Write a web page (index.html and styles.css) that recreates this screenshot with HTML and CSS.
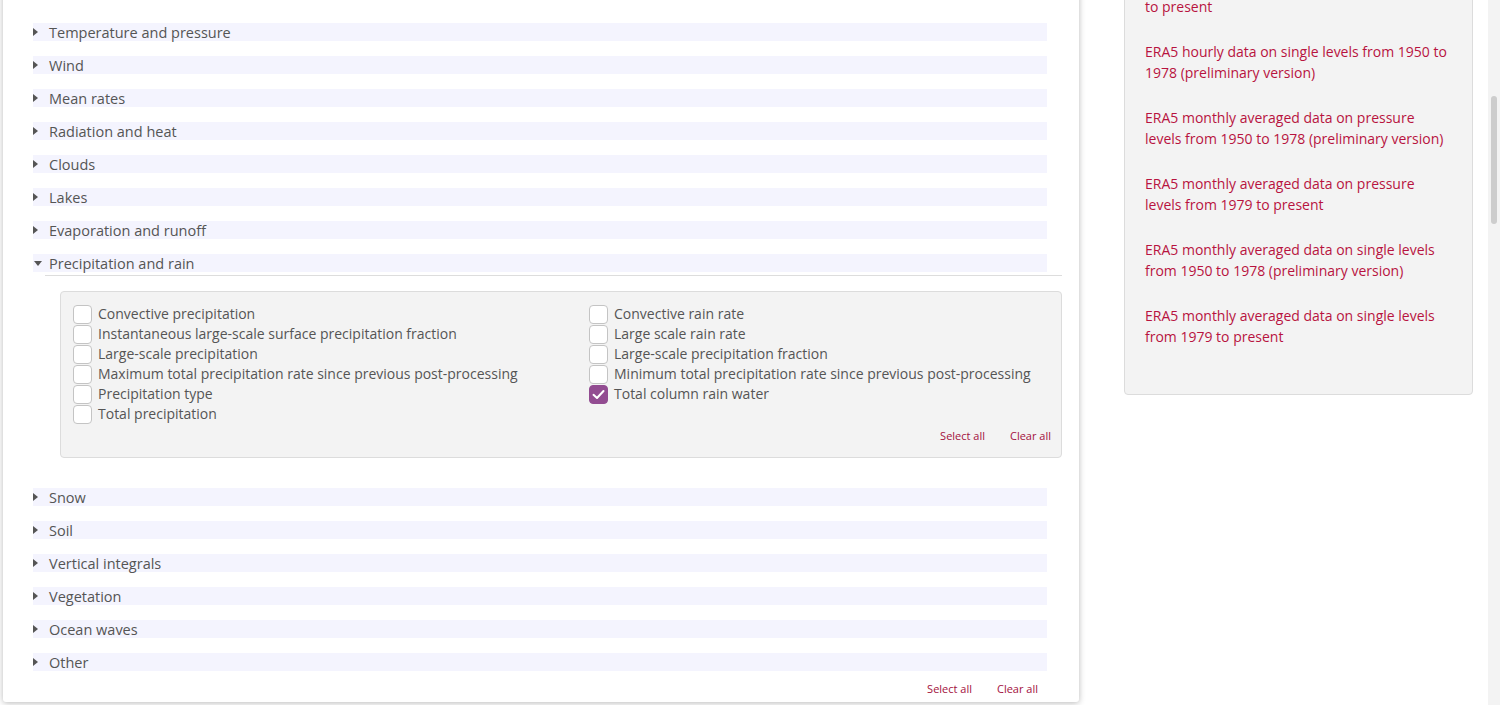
FILE: index.html
```html
<!DOCTYPE html>
<html lang="en">
<head>
<meta charset="utf-8">
<title>ERA5 variables</title>
<link rel="stylesheet" href="styles.css">
</head>
<body>
<div class="page">
  <main class="card">
    <div class="group"><div class="group-head"><span class="tri-right"></span><span class="head-text">Temperature and pressure</span></div></div>
    <div class="group"><div class="group-head"><span class="tri-right"></span><span class="head-text">Wind</span></div></div>
    <div class="group"><div class="group-head"><span class="tri-right"></span><span class="head-text">Mean rates</span></div></div>
    <div class="group"><div class="group-head"><span class="tri-right"></span><span class="head-text">Radiation and heat</span></div></div>
    <div class="group"><div class="group-head"><span class="tri-right"></span><span class="head-text">Clouds</span></div></div>
    <div class="group"><div class="group-head"><span class="tri-right"></span><span class="head-text">Lakes</span></div></div>
    <div class="group"><div class="group-head"><span class="tri-right"></span><span class="head-text">Evaporation and runoff</span></div></div>
    <div class="group group-open">
      <div class="group-head"><span class="tri-down"></span><span class="head-text">Precipitation and rain</span></div>
      <div class="divider"></div>
      <div class="panel">
        <div class="checks">
          <div class="col">
            <label class="check"><span class="box"></span>Convective precipitation</label>
            <label class="check"><span class="box"></span>Instantaneous large-scale surface precipitation fraction</label>
            <label class="check"><span class="box"></span>Large-scale precipitation</label>
            <label class="check"><span class="box"></span>Maximum total precipitation rate since previous post-processing</label>
            <label class="check"><span class="box"></span>Precipitation type</label>
            <label class="check"><span class="box"></span>Total precipitation</label>
          </div>
          <div class="col">
            <label class="check"><span class="box"></span>Convective rain rate</label>
            <label class="check"><span class="box"></span>Large scale rain rate</label>
            <label class="check"><span class="box"></span>Large-scale precipitation fraction</label>
            <label class="check"><span class="box"></span>Minimum total precipitation rate since previous post-processing</label>
            <label class="check"><span class="box box-on"><svg viewBox="0 0 19 19" width="19" height="19"><path d="M4.5 9.8 L8 13 L14.5 6" fill="none" stroke="#fff" stroke-width="2" stroke-linecap="round" stroke-linejoin="round"/></svg></span>Total column rain water</label>
          </div>
        </div>
        <div class="actions">
          <a class="action">Select all</a>
          <a class="action">Clear all</a>
        </div>
      </div>
    </div>
    <div class="group"><div class="group-head"><span class="tri-right"></span><span class="head-text">Snow</span></div></div>
    <div class="group"><div class="group-head"><span class="tri-right"></span><span class="head-text">Soil</span></div></div>
    <div class="group"><div class="group-head"><span class="tri-right"></span><span class="head-text">Vertical integrals</span></div></div>
    <div class="group"><div class="group-head"><span class="tri-right"></span><span class="head-text">Vegetation</span></div></div>
    <div class="group"><div class="group-head"><span class="tri-right"></span><span class="head-text">Ocean waves</span></div></div>
    <div class="group group-last"><div class="group-head"><span class="tri-right"></span><span class="head-text">Other</span></div></div>
    <div class="actions actions-main">
      <a class="action">Select all</a>
      <a class="action">Clear all</a>
    </div>
  </main>

  <aside class="side">
    <a class="side-link">ERA5 hourly data on pressure levels from 1979 to present</a>
    <a class="side-link">ERA5 hourly data on single levels from 1950 to 1978 (preliminary version)</a>
    <a class="side-link">ERA5 monthly averaged data on pressure levels from 1950 to 1978 (preliminary version)</a>
    <a class="side-link">ERA5 monthly averaged data on pressure levels from 1979 to present</a>
    <a class="side-link">ERA5 monthly averaged data on single levels from 1950 to 1978 (preliminary version)</a>
    <a class="side-link">ERA5 monthly averaged data on single levels from 1979 to present</a>
  </aside>

  <div class="scrollbar"><div class="thumb"></div></div>
</div>
</body>
</html>
```

FILE: styles.css
```css
* { box-sizing: border-box; }

html, body {
  margin: 0;
  padding: 0;
  height: 705px;
  overflow: hidden;
  background: #ffffff;
  font-family: "Open Sans", "Noto Sans", sans-serif;
  color: #555555;
}

.page {
  display: flex;
  align-items: flex-start;
  height: 705px;
}

.card {
  width: 1076px;
  height: 722px;
  margin-top: -20px;
  margin-left: 3px;
  padding: 43px 17px 6px 30px;
  background: #ffffff;
  border-radius: 3px;
  box-shadow: 0 1px 6px rgba(0, 0, 0, 0.28);
  flex: none;
}

.group {
  margin-bottom: 15px;
}

.group-last {
  margin-bottom: 0;
}

.group-head {
  display: flex;
  align-items: flex-start;
  height: 18px;
  margin-right: 15px;
  background: #f4f4fe;
  color: #555555;
}

.head-text {
  font-size: 14.5px;
  line-height: 20px;
  white-space: nowrap;
}

.tri-right {
  align-self: center;
  width: 0;
  height: 0;
  border-top: 4px solid transparent;
  border-bottom: 4px solid transparent;
  border-left: 5px solid #555555;
  margin-right: 11px;
  flex: none;
}

.tri-down {
  align-self: center;
  width: 0;
  height: 0;
  border-left: 4.5px solid transparent;
  border-right: 4.5px solid transparent;
  border-top: 5px solid #555555;
  margin-right: 7px;
  margin-left: 1px;
  margin-top: 1px;
  flex: none;
}

.group-open {
  margin-bottom: 30px;
}

.divider {
  height: 1px;
  margin: 3px 0 0 12px;
  background: #dddddd;
}

.panel {
  margin: 15px 0 0 27px;
  padding: 12px 10px 14px 12px;
  background: #f3f3f3;
  border: 1px solid #dcdcdc;
  border-radius: 4px;
}

.checks {
  display: grid;
  grid-template-columns: 516px 1fr;
}

.check {
  display: flex;
  align-items: center;
  height: 20px;
  font-size: 14px;
  line-height: 20px;
  color: #555555;
  white-space: nowrap;
}

.box {
  width: 19px;
  height: 19px;
  margin-right: 6px;
  background: #ffffff;
  border: 1px solid #c4c4c4;
  border-radius: 4px;
  flex: none;
  display: flex;
  align-items: center;
  justify-content: center;
}

.box-on {
  background: #924c91;
  border-color: #924c91;
}

.box-on svg {
  display: block;
  flex: none;
}

.actions {
  display: flex;
  justify-content: flex-end;
  gap: 25px;
  margin-top: 4px;
  height: 15px;
}

.actions-main {
  margin-top: 10px;
  margin-right: 24px;
}

.action {
  font-size: 11px;
  line-height: 15px;
  color: #a3113d;
  cursor: pointer;
}

.side {
  width: 349px;
  margin-left: 45px;
  margin-top: -50px;
  padding: 24px 20px 23px 20px;
  background: #f3f3f3;
  border: 1px solid #dcdcdc;
  border-radius: 4px;
  display: flex;
  flex-direction: column;
  flex: none;
}

.side-link {
  display: block;
  font-size: 14px;
  line-height: 21px;
  color: #b8133f;
  margin-bottom: 24px;
  cursor: pointer;
}

.scrollbar {
  width: 12px;
  height: 705px;
  margin-left: 15px;
  background: #f3f3f3;
  flex: none;
  display: flex;
  justify-content: center;
}

.thumb {
  width: 6px;
  height: 128px;
  margin-top: 96px;
  background: #cdcdcd;
  border-radius: 3px;
}
```
